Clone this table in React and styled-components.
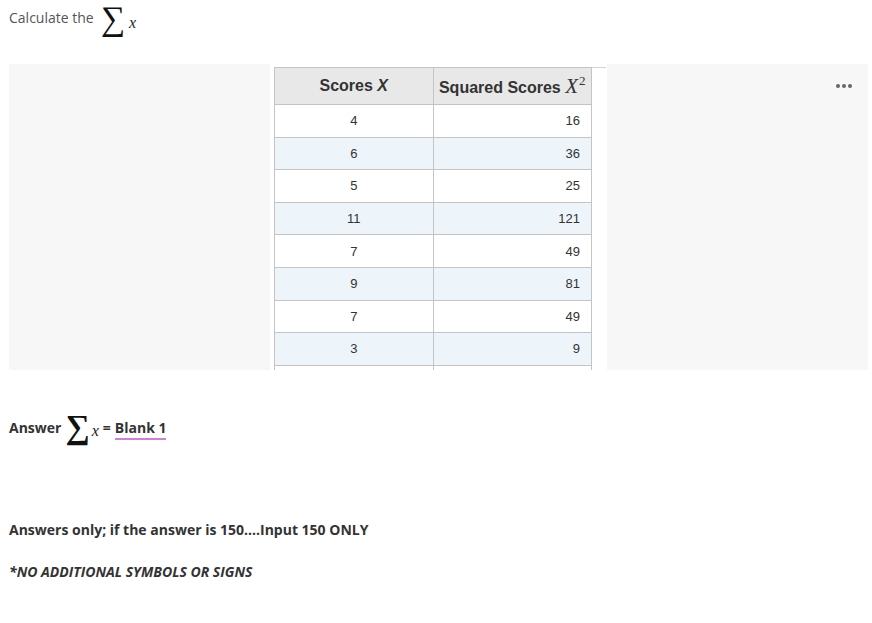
import React from 'react';
import styled, { createGlobalStyle } from 'styled-components';

const GlobalStyle = createGlobalStyle`
	body {
		margin: 0;
		background: #fff;
		font-family: 'Open Sans', sans-serif;
		color: #333;
	}
`;

const Page = styled.div`
	width: 859px;
	padding-left: 9px;
`;

const Title = styled.div`
	height: 64px;
	display: flex;
	align-items: flex-start;
	padding-top: 2px;
	box-sizing: border-box;
	font-size: 14px;
	color: #555;
`;

const Lead = styled.span`
	margin-bottom: 4px;
`;

const MathLine = styled.span`
	display: inline-flex;
	align-items: center;
	gap: ${(p) => p.$gap || '5px'};
`;

const Sigma = styled.span`
	font-family: 'Liberation Serif', serif;
	font-size: 34px;
	line-height: 34px;
	color: #111;
`;

const Var = styled.span`
	font-family: 'Liberation Serif', serif;
	font-style: italic;
	font-size: 16px;
	font-weight: normal;
	color: #222;
	margin-top: 8px;
	margin-left: -3px;
`;

const Band = styled.div`
	position: relative;
	height: 306px;
	background: #f7f7f7;
	display: flex;
	justify-content: center;
`;

const Scroller = styled.div`
	width: 337px;
	background: #fff;
	overflow: hidden;
	padding: 3px 0 0 4px;
	box-sizing: border-box;
`;

const TopRule = styled.div`
	width: 332px;
	border-top: 1px solid #d4d4d4;
`;

const Table = styled.table`
	border-collapse: collapse;
	width: 318px;
	font-family: 'Liberation Sans', Arial, sans-serif;
	font-size: 13px;
	color: #333;
	margin-top: -1px;
`;

const Th = styled.th`
	height: 36px;
	background: #e8e8e8;
	border: 1px solid #c4c4c4;
	font-size: 16px;
	font-weight: bold;
	color: #333;
	text-align: center;
	padding: 0;
	white-space: nowrap;
`;

const Row = styled.tr`
	background: ${(p) => (p.$alt ? '#edf5fb' : '#fff')};
`;

const Td = styled.td`
	height: 31.6px;
	border: 1px solid #c4c4c4;
	text-align: ${(p) => (p.$right ? 'right' : 'center')};
	padding: 0 ${(p) => (p.$right ? '11px' : '0')} 0 0;
	width: 50%;
`;

const Sup = styled.span`
	font-family: 'Liberation Serif', serif;
	font-style: italic;
	font-weight: normal;
	font-size: 21px;
	sup {
		font-style: normal;
		font-size: 13px;
		vertical-align: 8px;
		margin-left: 1px;
	}
`;

const Dots = styled.div`
	position: absolute;
	right: 16px;
	top: 20px;
	display: flex;
	gap: 2px;
	span {
		width: 4px;
		height: 4px;
		border-radius: 50%;
		background: #666;
	}
`;

const Answer = styled.div`
	margin-top: 40px;
	font-size: 14px;
	font-weight: bold;
	color: #333;
	display: flex;
	align-items: center;
	gap: 4px;
`;

const Blank = styled.span`
	border-bottom: 2px solid #d07ddb;
	padding-bottom: 1px;
	margin-top: 4px;
`;

const Note = styled.p`
	margin: ${(p) => p.$top} 0 0;
	font-size: 14px;
	font-weight: bold;
	font-style: ${(p) => (p.$italic ? 'italic' : 'normal')};
	color: #333;
`;

const rows = [
	[4, 16],
	[6, 36],
	[5, 25],
	[11, 121],
	[7, 49],
	[9, 81],
	[7, 49],
	[3, 9],
];

export default function App() {
	return (
		<Page>
			<GlobalStyle />
			<Title>
				<MathLine $gap="7px">
					<Lead>Calculate the</Lead>
					<Sigma>∑</Sigma>
					<Var>x</Var>
				</MathLine>
			</Title>
			<Band>
				<Scroller>
					<TopRule />
					<Table>
						<thead>
							<tr>
								<Th>
									Scores <i>X</i>
								</Th>
								<Th>
									Squared Scores{' '}
									<Sup>
										X<sup>2</sup>
									</Sup>
								</Th>
							</tr>
						</thead>
						<tbody>
							{rows.map(([x, sq], i) => (
								<Row key={i} $alt={i % 2 === 1}>
									<Td>{x}</Td>
									<Td $right>{sq}</Td>
								</Row>
							))}
							<Row>
								<Td />
								<Td $right />
							</Row>
						</tbody>
					</Table>
				</Scroller>
				<Dots>
					<span />
					<span />
					<span />
				</Dots>
			</Band>
			<Answer>
				Answer
				<MathLine $gap="5px">
					<Sigma>∑</Sigma>
					<Var>x</Var>
				</MathLine>
				= <Blank>Blank 1</Blank>
			</Answer>
			<Note $top="76px">Answers only; if the answer is 150....Input 150 ONLY</Note>
			<Note $top="23px" $italic>
				*NO ADDITIONAL SYMBOLS OR SIGNS
			</Note>
		</Page>
	);
}
